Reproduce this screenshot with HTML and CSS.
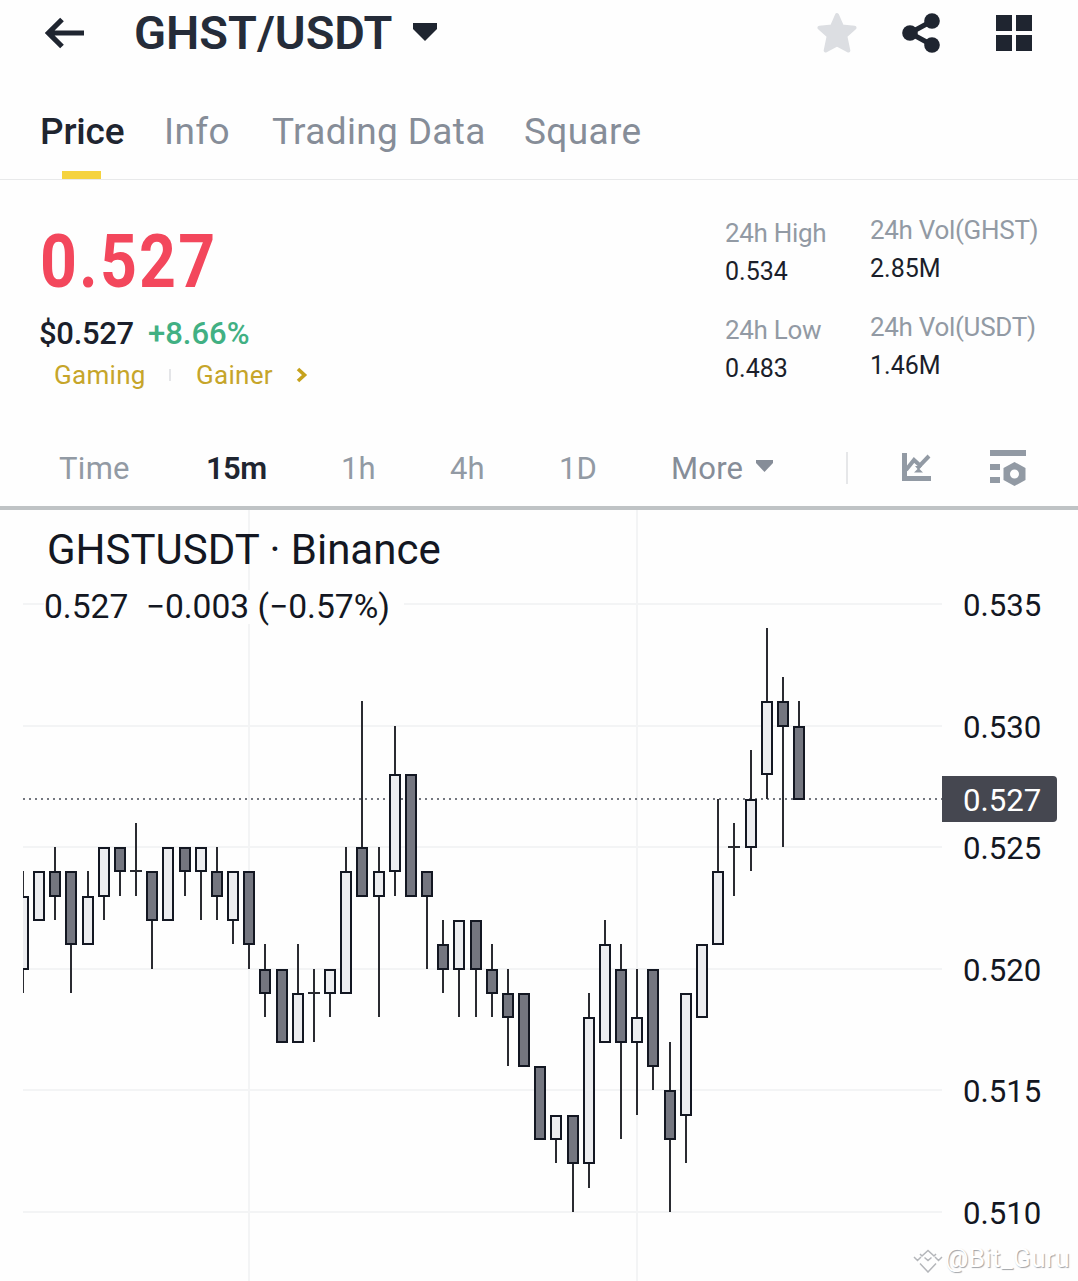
FILE: index.html
```html
<!DOCTYPE html>
<html lang="en">
<head>
    <meta charset="utf-8">
    <title>GHST/USDT</title>
    <link rel="stylesheet" href="styles.css">
    <script src="chart.js" defer></script>
</head>
<body>
    <header class="topbar">
        <svg class="back" width="40" height="32" viewBox="0 0 40 32">
            <path d="M39 16H4M17 2.500L3.500 16L17 29.500" fill="none" stroke="#1f2530" stroke-width="5.200"/>
        </svg>
        <h1>GHST/USDT</h1>
        <svg class="caret" width="24" height="18" viewBox="0 0 24 18">
            <path d="M0 0H24V6L12 18L0 6Z" fill="#1f2530"/>
        </svg>
        <div class="actions">
            <svg width="40" height="42" viewBox="0 0 40 42">
                <path d="M20 3L25 14.500L37.500 15.700L28.300 24L31.300 38.500L20 32.500L8.700 38.500L11.700 24L2.500 15.700L15 14.500Z" fill="#dcdee2" stroke="#dcdee2" stroke-width="4" stroke-linejoin="round"/>
            </svg>
            <svg width="38" height="42" viewBox="0 0 38 42">
                <path d="M30 9L8 21L30 33" fill="none" stroke="#1f2530" stroke-width="5"/>
                <g fill="#1f2530">
                    <circle cx="8" cy="21" r="7.800"/>
                    <circle cx="30" cy="9" r="7.800"/>
                    <circle cx="30" cy="33" r="7.800"/>
                </g>
            </svg>
            <svg width="36" height="36" viewBox="0 0 36 36">
                <path d="M0 0H16V16H0ZM20 0H36V16H20ZM0 20H16V36H0ZM20 20H36V36H20Z" fill="#1f2530"/>
            </svg>
        </div>
    </header>

    <nav class="tabs">
        <a class="active">Price</a>
        <a class="info">Info</a>
        <a class="trading">Trading Data</a>
        <a class="square">Square</a>
    </nav>

    <section class="summary">
        <div class="price">
            <div class="last">0.527</div>
            <div class="change"><span class="usd">$0.527</span><span class="up">+8.66%</span></div>
            <div class="tags">
                <span class="gaming">Gaming</span>
                <i></i>
                <span class="gainer">Gainer</span>
                <svg width="12" height="16" viewBox="0 0 12 16">
                    <path d="M2 2L8.500 8L2 14" fill="none" stroke="#c6a21d" stroke-width="3.600"/>
                </svg>
            </div>
        </div>
        <dl class="stats left">
            <dt class="high">24h High</dt>
            <dd>0.534</dd>
            <dt class="low">24h Low</dt>
            <dd>0.483</dd>
        </dl>
        <dl class="stats right">
            <dt>24h Vol(GHST)</dt>
            <dd>2.85M</dd>
            <dt>24h Vol(USDT)</dt>
            <dd>1.46M</dd>
        </dl>
    </section>

    <nav class="frames">
        <a>Time</a>
        <a class="active">15m</a>
        <a>1h</a>
        <a>4h</a>
        <a>1D</a>
        <a>More
            <svg width="17" height="12" viewBox="0 0 16 12" preserveAspectRatio="none">
                <path d="M0 0H16V3L8 12L0 3Z" fill="#868d98"/>
            </svg>
        </a>
        <i></i>
        <svg width="30" height="30" viewBox="0 0 30 30">
            <path d="M2.500 1V26.500H29" fill="none" stroke="#929aa4" stroke-width="5"/>
            <path d="M4 18L12 8L18 13.500L27 4" fill="none" stroke="#929aa4" stroke-width="4"/>
            <path d="M13 14H20L17.500 17L21 20.500H12L15.500 17Z" fill="#929aa4"/>
        </svg>
        <svg width="36" height="38" viewBox="0 0 36 38">
            <path d="M0 1H36V7H0ZM0 15H10V21H0ZM0 28H10V34H0Z" fill="#929aa4"/>
            <path fill-rule="evenodd" d="M24.500 13L35.500 19V31L24.500 37L13.500 31V19ZM24.500 20.500A4.500 4.500 0 1 0 24.500 29.500A4.500 4.500 0 1 0 24.500 20.500Z" fill="#929aa4"/>
        </svg>
    </nav>

    <main class="chart">
        <svg id="candles" width="1078" height="771" viewBox="0 510 1078 771"></svg>
        <div class="legend">
            <h2>GHSTUSDT · Binance</h2>
            <p><span>0.527</span> <span>−0.003 (−0.57%)</span></p>
        </div>
        <div class="watermark">
            <svg width="30" height="26" viewBox="0 0 30 26">
                <path d="M7 7L9 9L15 3.500L21 9L23 7M1 10L4.500 13.500L8 10M22 10L25.500 13.500L29 10M11.500 10.500L15 13.500L18.500 10.500M7 16.500L15 25L23 16.500"/>
            </svg>
            <span>@Bit_Guru</span>
        </div>
    </main>
</body>
</html>
```
FILE: styles.css
```css
body {
    margin: 0;
    width: 1078px;
    height: 1281px;
    overflow: hidden;
    background: #fefefe;
    color: #1b1f2b;
    font-family: Roboto, "Liberation Sans", sans-serif;
}
h1, h2, p, dl, dd {
    margin: 0;
    font-weight: normal;
}
svg {
    display: block;
    flex: none;
}

/* top bar */
.topbar {
    display: flex;
    align-items: center;
    height: 66px;
    padding: 0 46px 0 45px;
}
.topbar h1 {
    width: 279px;
    margin-left: 49px;
    line-height: 68px;
    font-size: 47px;
    font-weight: 600;
    color: #252c39;
    white-space: nowrap;
}
.caret {
    margin-top: -2px;
}
.actions {
    display: flex;
    align-items: center;
    margin-left: auto;
}
.actions svg + svg {
    margin-left: 45px;
}
.actions svg + svg + svg {
    margin-left: 56px;
}

/* tabs */
.tabs {
    display: grid;
    grid-template-columns: 124px 108px 252px 1fr;
    height: 113px;
    padding-left: 40px;
    border-bottom: 1px solid #e8e9ea;
    font-size: 37px;
    line-height: 132px;
    letter-spacing: .35px;
    color: #868d98;
    white-space: nowrap;
}
.tabs .active {
    position: relative;
    height: 113px;
    color: #1f2530;
    font-weight: 500;
    letter-spacing: -.2px;
}
.tabs .active::after {
    content: "";
    position: absolute;
    left: 22px;
    bottom: 0;
    width: 39px;
    height: 8px;
    background: #f5d33f;
}

/* price summary */
.summary {
    display: grid;
    grid-template-columns: 685px 145px 1fr;
    height: 250px;
    padding-left: 40px;
    white-space: nowrap;
}
.last {
    height: 84px;
    padding-top: 40px;
    font-size: 74px;
    font-weight: 700;
    line-height: 84px;
    letter-spacing: 2.5px;
    color: #f3475c;
    transform: scaleX(.87);
    transform-origin: left;
}
.change {
    display: flex;
    height: 40px;
    margin-top: 10px;
    font-size: 31px;
    font-weight: 500;
    line-height: 40px;
}
.usd {
    width: 109px;
    margin-left: -1px;
    letter-spacing: -.3px;
}
.up {
    color: #41b083;
}
.tags {
    display: flex;
    align-items: center;
    height: 36px;
    margin-top: 3px;
    padding-left: 14px;
    font-size: 26px;
    letter-spacing: .3px;
    color: #c6a52a;
}
.tags .gaming {
    width: 115px;
}
.tags i {
    width: 2px;
    height: 12px;
    margin-right: 25px;
    background: #e4e5e8;
}
.tags .gainer {
    width: 100px;
}
.stats {
    padding-top: 32px;
    font-size: 25px;
}
.stats.left {
    padding-top: 35px;
}
.stats dt {
    line-height: 37px;
    font-size: 26px;
    letter-spacing: -.3px;
    color: #929aa4;
}
.stats dd {
    line-height: 39px;
    margin-bottom: 21px;
}
.stats.left dd {
    line-height: 40px;
    margin-bottom: 20px;
}

/* time frames */
.frames {
    display: flex;
    align-items: center;
    height: 76px;
    padding-left: 59px;
    border-bottom: 4px solid #bfc3c5;
    font-size: 31px;
    line-height: 38px;
    color: #929aa4;
}
.frames a {
    width: 109px;
    padding-top: 2px;
}
.frames a:nth-child(1) {
    width: 147px;
    letter-spacing: .3px;
}
.frames a:nth-child(2) {
    width: 135px;
    color: #1f2530;
    font-weight: 600;
    letter-spacing: -.6px;
}
.frames a:nth-child(5) {
    width: 112px;
}
.frames a:nth-child(6) {
    display: flex;
    width: 175px;
    align-items: center;
    gap: 13px;
    letter-spacing: .2px;
    color: #868d98;
}
.frames a svg {
    margin-top: -7px;
}
.frames > i {
    width: 2px;
    height: 32px;
    margin-right: 54px;
    background: #e6e7e9;
}
.frames > svg {
    margin-top: -2px;
}
.frames > svg + svg {
    margin: 0 0 0 58px;
}

/* chart */
.chart {
    position: relative;
    height: 771px;
}
.legend {
    position: absolute;
    left: 44px;
    top: 15px;
    color: #131722;
    white-space: nowrap;
}
.legend h2 {
    padding-left: 3px;
    font-size: 42px;
    line-height: 50px;
}
.legend p {
    width: 360px;
    margin-top: 15px;
    font-size: 33.600px;
    line-height: 34px;
    background: #fefefe;
}
.legend span + span {
    margin-left: 9px;
}
.grid {
    stroke: #f3f4f5;
    stroke-width: 2;
}
.wick {
    stroke: #2a2b31;
    stroke-width: 2;
}
.up-body, .down-body {
    stroke: #131722;
    stroke-width: 2;
}
.up-body {
    fill: #ecedf0;
}
.down-body {
    fill: #747680;
}
.current {
    stroke: #74777f;
    stroke-width: 2;
    stroke-dasharray: 2 4;
}
.axis {
    font-size: 31.200px;
    fill: #131722;
}
.badge {
    fill: #454750;
}
.axis.now {
    fill: #fff;
}
.watermark {
    position: absolute;
    left: 913px;
    bottom: 7px;
    display: flex;
    align-items: center;
    gap: 2px;
    font-size: 26px;
    line-height: 32px;
    letter-spacing: .4px;
    color: #fff;
    text-shadow: 1px 1px 1px #a0a2a6;
}
.watermark svg {
    margin-top: 3px;
    fill: none;
    stroke: #b4b6ba;
    stroke-width: 1.5;
}
```
FILE: chart.js
```js
// [body top, body bottom, high, low, direction], in thousandths
var candles = [
    [523, 520, 524, 519, 'up'], [524, 522, 524, 522, 'up'], [524, 523, 525, 522, 'down'],
    [524, 521, 524, 519, 'down'], [523, 521, 524, 521, 'up'], [525, 523, 525, 522, 'up'],
    [525, 524, 525, 523, 'down'], [524, 524, 526, 523, 'up'], [524, 522, 524, 520, 'down'],
    [525, 522, 525, 522, 'up'], [525, 524, 525, 523, 'down'], [525, 524, 525, 522, 'up'],
    [524, 523, 525, 522, 'down'], [524, 522, 524, 521, 'up'], [524, 521, 524, 520, 'down'],
    [520, 519, 521, 518, 'down'], [520, 517, 520, 517, 'down'], [519, 517, 521, 517, 'up'],
    [519, 519, 520, 517, 'up'], [520, 519, 520, 518, 'up'], [524, 519, 525, 519, 'up'],
    [525, 523, 531, 523, 'down'], [524, 523, 525, 518, 'up'], [528, 524, 530, 523, 'up'],
    [528, 523, 528, 523, 'down'], [524, 523, 524, 520, 'down'], [521, 520, 522, 519, 'down'],
    [522, 520, 522, 518, 'up'], [522, 520, 522, 518, 'down'], [520, 519, 521, 518, 'down'],
    [519, 518, 520, 516, 'down'], [519, 516, 519, 516, 'down'], [516, 513, 516, 513, 'down'],
    [514, 513, 514, 512, 'up'], [514, 512, 514, 510, 'down'], [518, 512, 519, 511, 'up'],
    [521, 517, 522, 517, 'up'], [520, 517, 521, 513, 'down'], [518, 517, 520, 514, 'up'],
    [520, 516, 520, 515, 'down'], [515, 513, 517, 510, 'down'], [519, 514, 519, 512, 'up'],
    [521, 518, 521, 518, 'up'], [524, 521, 527, 521, 'up'], [525, 525, 526, 523, 'up'],
    [527, 525, 529, 524, 'up'], [531, 528, 534, 527, 'up'], [531, 530, 532, 525, 'down'],
    [530, 527, 531, 527, 'down']
];

function y(price) {
    return Math.round(603.95 + (535 - price) * 24.32);
}
function line(cls, x1, y1, x2, y2) {
    return '<line class="' + cls + '" x1="' + x1 + '" y1="' + y1 + '" x2="' + x2 + '" y2="' + y2 + '"/>';
}

var out = '<clipPath id="plot"><rect x="23" y="510" width="919" height="771"/></clipPath>';
out += line('grid', 249, 510, 249, 1281) + line('grid', 637, 510, 637, 1281);
for (var p = 535; p >= 510; p -= 5) {
    out += line('grid', 23, y(p), 942, y(p));
    out += '<text class="axis" x="963" y="' + (y(p) + 12) + '">0.' + p + '</text>';
}
out += line('current', 23, 799, 942, 799);
out += '<g clip-path="url(#plot)">';
candles.forEach(function (c, i) {
    var x = Math.round(22.86 + i * 16.17);
    out += line('wick', x, y(c[2]), x, y(c[3]));
    if (c[0] == c[1]) {
        out += line('wick', x - 6, y(c[0]), x + 6, y(c[0]));
    } else {
        out += '<rect class="' + c[4] + '-body" x="' + (x - 5) + '" y="' + (y(c[0]) + 1) +
            '" width="10" height="' + (y(c[1]) - y(c[0]) - 1) + '"/>';
    }
});
out += '</g>';
// current price label
out += '<path class="badge" d="M942 776H1053Q1057 776 1057 780V818Q1057 822 1053 822H942Z"/>';
out += '<text class="axis now" x="963" y="811">0.527</text>';
document.getElementById('candles').innerHTML = out;
```
